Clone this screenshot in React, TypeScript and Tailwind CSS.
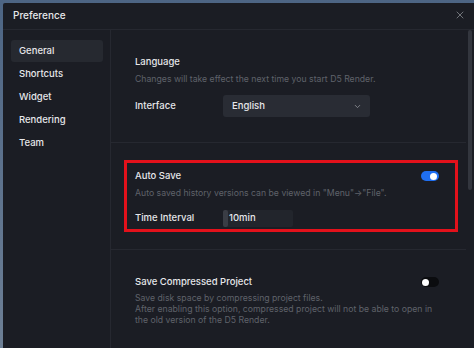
import { X, ChevronDown } from "lucide-react";

const navItems = ["General", "Shortcuts", "Widget", "Rendering", "Team"];

function Toggle({ on }: { on: boolean }) {
  return (
    <div
      className={
        on
          ? "w-[18px] h-[10px] rounded-full bg-[#1f6ff2] flex items-center justify-end pr-[2px]"
          : "w-[18px] h-[10px] rounded-full bg-[#0b0c0f] flex items-center justify-start pl-[1px]"
      }
    >
      <div className="w-[7px] h-[7px] rounded-full bg-white" />
    </div>
  );
}

function App() {
  return (
    <div
      className="w-[474px] h-[348px] overflow-hidden bg-gradient-to-b from-[#4d6584] to-[#6d7f95] pl-[3px] pt-[3px]"
      style={{ fontFamily: "Inter, 'Noto Sans', sans-serif" }}
    >
      <div className="w-full h-full bg-[#1b1d24] flex flex-col rounded-tl-[2px]">
        {/* title bar */}
        <div className="h-[27px] shrink-0 flex items-center justify-between pl-[10px] pr-[8px] pb-[2px] border-b border-[#262830]">
          <span className="text-[10px] font-medium text-[#e6e7ea]">Preference</span>
          <X size={12} strokeWidth={1.5} className="text-[#8e9096]" />
        </div>

        <div className="flex flex-1 min-h-0">
          {/* sidebar */}
          <div className="w-[108px] shrink-0 border-r border-[#262830] pt-[10px] pl-[8px] pr-[7px] flex flex-col gap-[1px]">
            {navItems.map((item, i) => (
              <div
                key={item}
                className={
                  i === 0
                    ? "h-[22px] rounded-[3px] bg-[#262930] flex items-center pl-[8px] text-[9.5px] font-medium text-[#e6e7ea]"
                    : "h-[22px] flex items-center pl-[8px] text-[9.5px] font-medium text-[#e6e7ea]"
                }
              >
                {item}
              </div>
            ))}
          </div>

          {/* content */}
          <div className="flex-1 flex min-w-0">
            <div className="flex-1 flex flex-col min-w-0">
              <div className="pt-[25px] pb-[25px] pl-[24px] border-b border-[#262830]">
                <div className="text-[9.5px] font-medium text-[#e6e7ea] leading-[14px]">Language</div>
                <div className="text-[8.7px] text-[#5f626a] leading-[14px] mt-[3px]">
                  Changes will take effect the next time you start D5 Render.
                </div>
                <div className="flex items-center mt-[9px]">
                  <span className="w-[88px] text-[9.5px] font-medium text-[#e6e7ea]">Interface</span>
                  <div className="w-[147px] h-[22px] rounded-[3px] bg-[#292c34] flex items-center justify-between pl-[9px] pr-[8px]">
                    <span className="text-[9.5px] font-medium text-[#e6e7ea]">English</span>
                    <ChevronDown size={9} strokeWidth={2} className="text-[#9a9ca2]" />
                  </div>
                </div>
              </div>

              <div className="pt-[17px] pb-[17px] pl-[13px] pr-[8px] border-b border-[#262830]">
                <div className="border-[3px] border-[#e3111b] pt-[6px] pb-[2px] pl-[8px] pr-[16px]">
                  <div className="flex items-center justify-between">
                    <span className="text-[9.5px] font-medium text-[#e6e7ea] leading-[14px]">Auto Save</span>
                    <Toggle on />
                  </div>
                  <div className="text-[8.7px] text-[#5f626a] leading-[14px] mt-[3px]">
                    Auto saved history versions can be viewed in "Menu"→"File".
                  </div>
                  <div className="flex items-center mt-[10px]">
                    <span className="w-[88px] text-[9.5px] font-medium text-[#e6e7ea]">Time Interval</span>
                    <div className="w-[70px] h-[17px] rounded-[2px] bg-[#22252c] flex items-center">
                      <div className="w-[5px] h-full rounded-[2px] bg-[#3a3d45]" />
                      <span className="ml-[1px] text-[9.5px] font-medium text-[#e6e7ea]">10min</span>
                    </div>
                  </div>
                </div>
              </div>

              <div className="pt-[25px] pl-[24px] pr-[27px]">
                <div className="flex items-center justify-between">
                  <span className="text-[9.5px] font-medium text-[#e6e7ea] leading-[14px]">
                    Save Compressed Project
                  </span>
                  <Toggle on={false} />
                </div>
                <div className="text-[8.7px] text-[#5f626a] leading-[11px] mt-[4px]">
                  Save disk space by compressing project files.
                  <br />
                  After enabling this option, compressed project will not be able to open in
                  <br />
                  the old version of the D5 Render.
                </div>
              </div>
            </div>

            {/* scrollbar */}
            <div className="w-[8px] shrink-0 pl-[2px] pr-[2px]">
              <div className="w-[4px] h-[160px] rounded-full bg-[#33363e]" />
            </div>
          </div>
        </div>
      </div>
    </div>
  );
}

export default App;
